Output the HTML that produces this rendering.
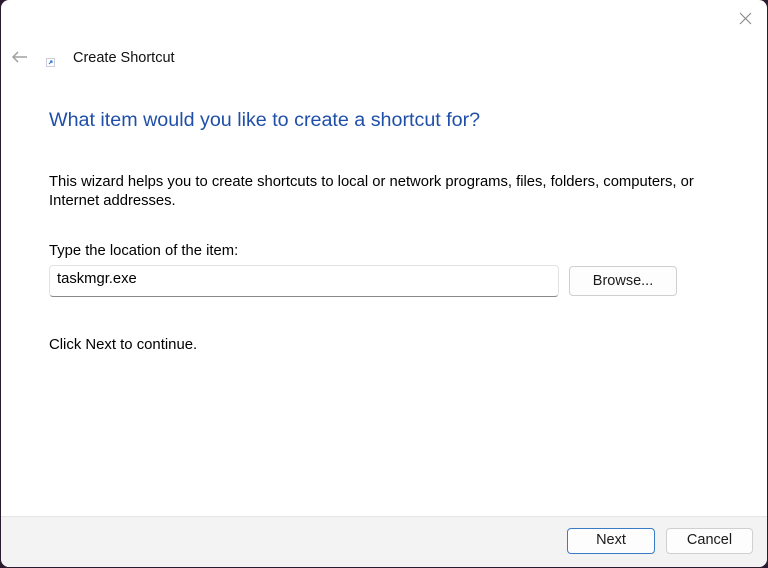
<!DOCTYPE html>
<html><head><style>
*{margin:0;padding:0;box-sizing:border-box}
body{width:768px;height:568px;background:#2a1a30;font-family:"Segoe UI","Liberation Sans",sans-serif;overflow:hidden;position:relative}
.win{position:absolute;left:1px;top:0;width:766px;height:567px;background:#fff;border-radius:8px;overflow:hidden}
.t{position:absolute;white-space:nowrap;color:#000;font-size:14px}
.footer{position:absolute;left:0;right:0;top:516px;bottom:0;background:#f3f3f3;border-top:1px solid #e5e5e5}
.btn{position:absolute;height:26px;background:#fdfdfd;border:1px solid #d0d0d0;border-radius:4px;font-size:14.5px;text-align:center;line-height:23px;color:#1a1a1a}
</style></head><body>
<div class="win">
<svg style="position:absolute;left:10px;top:50px" width="18" height="14" viewBox="0 0 18 14"><path d="M16 7H2M7 2L2 7l5 5" stroke="#a0a0a0" stroke-width="1.5" fill="none"/></svg>
<svg style="position:absolute;left:45px;top:58px" width="9" height="9" viewBox="0 0 9 9"><rect x="0.5" y="0.5" width="8" height="8" fill="#fff" stroke="#ccd"/><path d="M3 6l3-3M4 3h2v2" stroke="#2a70d0" stroke-width="1" fill="none"/></svg>
<div class="t" style="left:72px;top:50px;font-size:14.5px;color:#111">Create Shortcut</div>
<svg style="position:absolute;left:738px;top:12px" width="13" height="13" viewBox="0 0 13 13"><path d="M1 1l11 11M12 1L1 12" stroke="#888" stroke-width="1.1"/></svg>
<div class="t" style="left:48px;top:109px;font-size:19.7px;color:#1f4fa8">What item would you like to create a shortcut for?</div>
<div class="t" style="left:48px;top:173px;font-size:14.8px;line-height:19px">This wizard helps you to create shortcuts to local or network programs, files, folders, computers, or<br>Internet addresses.</div>
<div class="t" style="left:48px;top:243px;font-size:14.8px">Type the location of the item:</div>
<div style="position:absolute;left:48px;top:265px;width:510px;height:32px;border:1px solid #e2e2e2;border-bottom:1px solid #8a8a8a;border-radius:4px;background:#fff"></div>
<div class="t" style="left:56px;top:271px;font-size:14.8px">taskmgr.exe</div>
<div class="btn" style="left:568px;top:266px;width:108px;height:30px;line-height:28px">Browse...</div>
<div class="t" style="left:48px;top:337px;font-size:14.9px">Click Next to continue.</div>
<div class="footer"></div>
<div class="btn" style="left:566px;top:528px;width:88px;height:26px;border:1px solid #3a7bc8">Next</div>
<div class="btn" style="left:665px;top:528px;width:87px;height:26px">Cancel</div>
</div>
</body></html>
